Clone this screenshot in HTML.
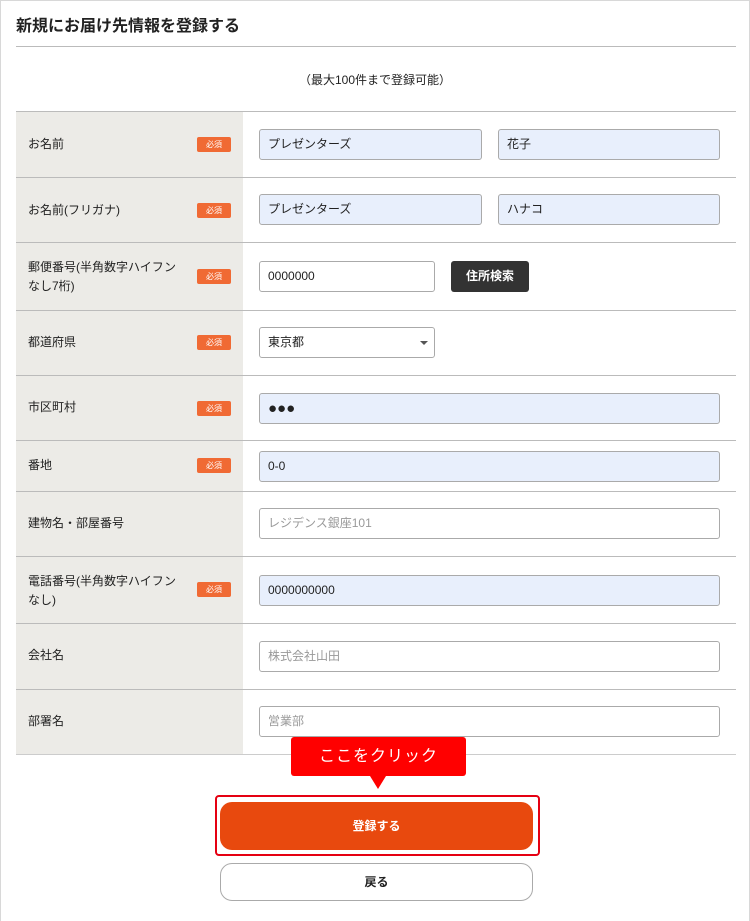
<!DOCTYPE html><html><head><meta charset="utf-8"><style>
*{box-sizing:border-box;margin:0;padding:0}
body{width:750px;height:921px;background:#fff;font-family:"Liberation Sans","Noto Sans CJK JP",sans-serif;color:#222;position:relative;overflow:hidden}
.frame{position:absolute;left:0;top:0;width:750px;height:921px;border:1px solid #d8d8d8;border-bottom:none}
.a{position:absolute}
h1{position:absolute;left:16px;top:12px;font-size:16px;font-weight:bold}
.hr{position:absolute;left:16px;width:720px;height:1px;background:#bbb}
.lab{position:absolute;left:16px;width:227px;background:#ecebe7}
.lt{position:absolute;left:28px;font-size:12px;line-height:19px;color:#222}
.req{position:absolute;left:197px;width:34px;height:15px;background:#f06a34;color:#fff;font-size:8px;line-height:15px;text-align:center;border-radius:2px}
.in{position:absolute;height:31px;border:1px solid #aaa;border-radius:3px;font-size:12px;line-height:29px;padding-left:8px}
.f{background:#e8effc}
.ph{color:#999}
</style></head><body>
<div class="frame"></div>
<h1>新規にお届け先情報を登録する</h1>
<div class="hr" style="top:46px"></div>
<div class="a" style="left:0;width:750px;top:71px;text-align:center;font-size:12px">（最大100件まで登録可能）</div>

<div class="lab" style="top:111px;height:643px"></div>
<div class="hr" style="top:111px"></div><div class="hr" style="top:177px"></div><div class="hr" style="top:242px"></div><div class="hr" style="top:310px"></div><div class="hr" style="top:375px"></div><div class="hr" style="top:440px"></div><div class="hr" style="top:491px"></div><div class="hr" style="top:556px"></div><div class="hr" style="top:623px"></div><div class="hr" style="top:689px"></div><div class="hr" style="top:754px;background:#ccc"></div>

<div class="lt" style="top:135px">お名前</div><div class="req" style="top:137px">必須</div>
<div class="in f" style="left:259px;top:129px;width:223px">プレゼンターズ</div>
<div class="in f" style="left:498px;top:129px;width:222px">花子</div>

<div class="lt" style="top:201px">お名前(フリガナ)</div><div class="req" style="top:203px">必須</div>
<div class="in f" style="left:259px;top:194px;width:223px">プレゼンターズ</div>
<div class="in f" style="left:498px;top:194px;width:222px">ハナコ</div>

<div class="lt" style="top:258px">郵便番号(半角数字ハイフン<br>なし7桁)</div><div class="req" style="top:269px">必須</div>
<div class="in" style="left:259px;top:261px;width:176px">0000000</div>
<div class="a" style="left:451px;top:261px;width:78px;height:31px;background:#333;color:#fff;border-radius:3px;font-size:12px;font-weight:bold;line-height:31px;text-align:center">住所検索</div>

<div class="lt" style="top:333px">都道府県</div><div class="req" style="top:335px">必須</div>
<div class="in" style="left:259px;top:327px;width:176px">東京都<span class="a" style="left:160px;top:13px;border:4px solid transparent;border-top:4px solid #555;border-bottom:none"></span></div>

<div class="lt" style="top:398px">市区町村</div><div class="req" style="top:401px">必須</div>
<div class="in f" style="left:259px;top:393px;width:461px;font-size:15px">●●●</div>

<div class="lt" style="top:456px">番地</div><div class="req" style="top:458px">必須</div>
<div class="in f" style="left:259px;top:451px;width:461px">0-0</div>

<div class="lt" style="top:514px">建物名・部屋番号</div>
<div class="in ph" style="left:259px;top:508px;width:461px">レジデンス銀座101</div>

<div class="lt" style="top:572px">電話番号(半角数字ハイフン<br>なし)</div><div class="req" style="top:582px">必須</div>
<div class="in f" style="left:259px;top:575px;width:461px">0000000000</div>

<div class="lt" style="top:646px">会社名</div>
<div class="in ph" style="left:259px;top:641px;width:461px">株式会社山田</div>

<div class="lt" style="top:712px">部署名</div>
<div class="in ph" style="left:259px;top:706px;width:461px">営業部</div>

<div class="a" style="left:291px;top:737px;width:175px;height:39px;background:#f00;border-radius:3px;color:#fff;font-size:16px;line-height:39px;text-align:center;letter-spacing:1px">ここをクリック</div>
<div class="a" style="left:370px;top:776px;border:8px solid transparent;border-top:13px solid #f00;border-bottom:none"></div>
<div class="a" style="left:215px;top:795px;width:325px;height:61px;border:2px solid #e50012;border-radius:4px"></div>
<div class="a" style="left:220px;top:802px;width:313px;height:48px;background:#e8490e;border-radius:12px;color:#fff;font-size:12px;font-weight:bold;line-height:48px;text-align:center">登録する</div>
<div class="a" style="left:220px;top:863px;width:313px;height:38px;border:1px solid #aaa;border-radius:12px;font-size:12px;font-weight:bold;line-height:36px;text-align:center">戻る</div>
</body></html>
